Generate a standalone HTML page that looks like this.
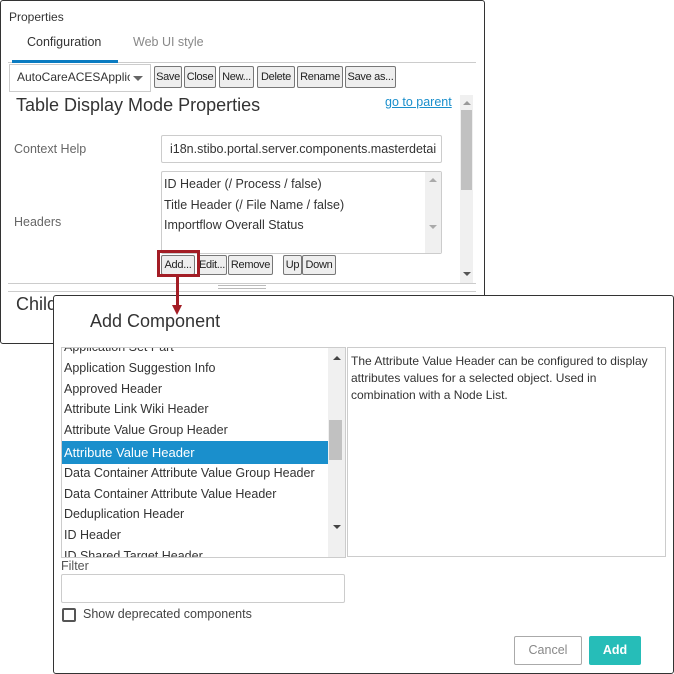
<!DOCTYPE html>
<html><head><style>
*{box-sizing:border-box;margin:0;padding:0}
body{width:674px;height:674px;background:#fff;position:relative;overflow:hidden;font-family:"Liberation Sans",sans-serif;color:#333}
.a{position:absolute;white-space:nowrap}
.btn{position:absolute;top:66px;height:22px;border:1px solid #777;border-radius:2px;background:#eee;font-size:11px;line-height:20px;text-align:center;color:#222;white-space:nowrap;overflow:hidden;letter-spacing:-0.3px}
.b2{top:255px;height:20px;line-height:18px}
.li{position:absolute;left:64px;font-size:12.5px;color:#333;white-space:nowrap}
</style></head><body>
<div class="a" style="left:0;top:0;width:485px;height:344px;border:1px solid #333;border-radius:3px"></div>
<div class="a" style="left:9px;top:10px;font-size:12px">Properties</div>
<div class="a" style="left:27px;top:35px;font-size:12.5px;color:#333">Configuration</div>
<div class="a" style="left:133px;top:35px;font-size:12.5px;color:#888">Web UI style</div>
<div class="a" style="left:8px;top:62px;width:468px;height:1px;background:#ccc"></div>
<div class="a" style="left:12px;top:60px;width:106px;height:3px;background:#0a7bc1"></div>
<div class="a" style="left:9px;top:64px;width:142px;height:28px;border:1px solid #ccc;background:#fff"></div>
<div class="a" style="left:17px;top:70px;font-size:12px;width:113px;overflow:hidden">AutoCareACESApplic</div>
<div class="a" style="left:133px;top:76px;border-left:5px solid transparent;border-right:5px solid transparent;border-top:5px solid #666"></div>
<div class="btn" style="left:154px;width:28px">Save</div>
<div class="btn" style="left:184px;width:32px">Close</div>
<div class="btn" style="left:219px;width:35px">New...</div>
<div class="btn" style="left:257px;width:38px">Delete</div>
<div class="btn" style="left:297px;width:46px">Rename</div>
<div class="btn" style="left:345px;width:51px">Save as...</div>
<div class="a" style="left:16px;top:95px;font-size:18px;color:#333">Table Display Mode Properties</div>
<div class="a" style="left:385px;top:95px;font-size:12.5px;color:#1a8fcc;text-decoration:underline">go to parent</div>
<div class="a" style="left:460px;top:95px;width:13px;height:188px;background:#f0f0f0"></div>
<div class="a" style="left:461px;top:110px;width:11px;height:80px;background:#c1c1c1"></div>
<div class="a" style="left:463px;top:101px;border-left:4px solid transparent;border-right:4px solid transparent;border-bottom:4px solid #999"></div>
<div class="a" style="left:463px;top:272px;border-left:4px solid transparent;border-right:4px solid transparent;border-top:4px solid #555"></div>
<div class="a" style="left:14px;top:142px;font-size:12.5px;color:#666">Context Help</div>
<div class="a" style="left:161px;top:135px;width:281px;height:28px;border:1px solid #ccc;border-radius:2px;font-size:12.5px;line-height:26px;padding-left:8px;overflow:hidden;color:#333">i18n.stibo.portal.server.components.masterdetai</div>
<div class="a" style="left:14px;top:215px;font-size:12.5px;color:#666">Headers</div>
<div class="a" style="left:161px;top:171px;width:281px;height:83px;border:1px solid #ccc;border-radius:2px"></div>
<div class="a" style="left:425px;top:172px;width:16px;height:81px;background:#f0f0f0"></div>
<div class="a" style="left:429px;top:178px;border-left:4px solid transparent;border-right:4px solid transparent;border-bottom:4px solid #aaa"></div>
<div class="a" style="left:429px;top:225px;border-left:4px solid transparent;border-right:4px solid transparent;border-top:4px solid #aaa"></div>
<div class="a" style="left:164px;top:174px;font-size:12.5px;line-height:20.5px">ID Header (/ Process / false)<br>Title Header (/ File Name / false)<br>Importflow Overall Status</div>
<div class="btn b2" style="left:161px;width:34px">Add...</div>
<div class="btn b2" style="left:197px;width:30px">Edit...</div>
<div class="btn b2" style="left:228px;width:45px">Remove</div>
<div class="btn b2" style="left:283px;width:19px">Up</div>
<div class="btn b2" style="left:302px;width:34px">Down</div>
<div class="a" style="left:157px;top:250px;width:43px;height:27px;border:3px solid #a31d25"></div>
<div class="a" style="left:8px;top:283px;width:468px;height:1px;background:#ccc"></div>
<div class="a" style="left:218px;top:285px;width:48px;height:4px;border-top:1px solid #bbb;border-bottom:1px solid #bbb"></div>
<div class="a" style="left:8px;top:291px;width:468px;height:1px;background:#ccc"></div>
<div class="a" style="left:16px;top:294px;font-size:18px">Child</div>
<!-- dialog -->
<div class="a" style="left:53px;top:295px;width:621px;height:379px;border:1px solid #333;border-radius:3px;background:#fff"></div>
<div class="a" style="left:176px;top:277px;width:3px;height:30px;background:#a31d25"></div>
<div class="a" style="left:172px;top:305px;border-left:5.5px solid transparent;border-right:5.5px solid transparent;border-top:10px solid #a31d25"></div>
<div class="a" style="left:90px;top:311px;font-size:18px;color:#333">Add Component</div>
<div class="a" style="left:61px;top:347px;width:285px;height:211px;border:1px solid #ccc;overflow:hidden">
<div class="li" style="left:2px;top:-8px">Application Set Part</div>
<div class="li" style="left:2px;top:13px">Application Suggestion Info</div>
<div class="li" style="left:2px;top:34px">Approved Header</div>
<div class="li" style="left:2px;top:54px">Attribute Link Wiki Header</div>
<div class="li" style="left:2px;top:75px">Attribute Value Group Header</div>
<div class="a" style="left:0;top:93px;width:266px;height:23px;background:#1a8fcc"></div>
<div class="li" style="left:2px;top:97px;color:#fff;font-size:13px">Attribute Value Header</div>
<div class="li" style="left:2px;top:118px">Data Container Attribute Value Group Header</div>
<div class="li" style="left:2px;top:139px">Data Container Attribute Value Header</div>
<div class="li" style="left:2px;top:159px">Deduplication Header</div>
<div class="li" style="left:2px;top:180px">ID Header</div>
<div class="li" style="left:2px;top:201px">ID Shared Target Header</div>
<div class="a" style="left:266px;top:0;width:17px;height:209px;background:#f0f0f0"></div>
<div class="a" style="left:267px;top:72px;width:13px;height:40px;background:#c1c1c1"></div>
<div class="a" style="left:271px;top:8px;border-left:4px solid transparent;border-right:4px solid transparent;border-bottom:4px solid #444"></div>
<div class="a" style="left:271px;top:177px;border-left:4px solid transparent;border-right:4px solid transparent;border-top:4px solid #444"></div>
</div>
<div class="a" style="left:347px;top:347px;width:319px;height:210px;border:1px solid #ccc;font-size:12px;line-height:16.8px;padding:5px 3px;white-space:normal;color:#333">The Attribute Value Header can be configured to display attributes values for a selected object. Used in combination with a Node List.</div>
<div class="a" style="left:61px;top:559px;font-size:12.5px;color:#555">Filter</div>
<div class="a" style="left:61px;top:574px;width:284px;height:29px;border:1px solid #ccc;border-radius:2px"></div>
<div class="a" style="left:62px;top:608px;width:14px;height:14px;border:2px solid #555;border-radius:2px"></div>
<div class="a" style="left:83px;top:607px;font-size:12.5px;color:#444">Show deprecated components</div>
<div class="a" style="left:514px;top:636px;width:68px;height:29px;border:1px solid #aaa;border-radius:2px;font-size:12.5px;line-height:27px;text-align:center;color:#888">Cancel</div>
<div class="a" style="left:589px;top:636px;width:52px;height:29px;background:#26bdb8;border-radius:2px;font-size:12.5px;font-weight:bold;line-height:29px;text-align:center;color:#fff">Add</div>
</body></html>
